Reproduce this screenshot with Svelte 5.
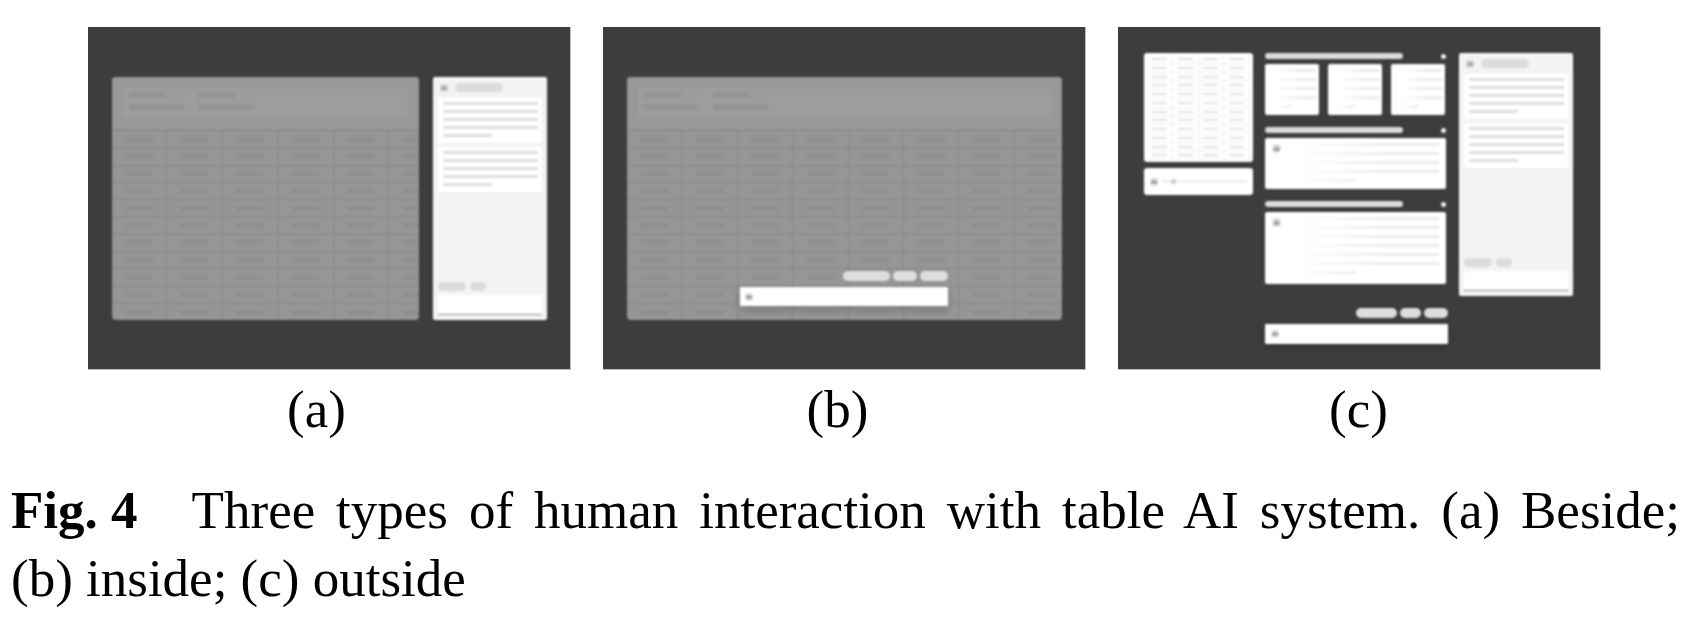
<script lang="ts">
    const rows = Array.from({ length: 11 })
    const miniRows = Array.from({ length: 12 })

    function range(n: number) {
        return Array.from({ length: n })
    }
</script>

{#snippet sheet(cols: number)}
    <div class="sheet-head">
        <div class="head-box">
            <div class="head-col">
                <span class="bar short"></span>
                <span class="bar long"></span>
            </div>
            <div class="head-col">
                <span class="bar short"></span>
                <span class="bar long"></span>
            </div>
        </div>
    </div>
    {#each rows as _}
        <div class="sheet-row">
            {#each range(cols) as _}
                <div class="sheet-cell"><span></span></div>
            {/each}
        </div>
    {/each}
{/snippet}

{#snippet message()}
    <div class="message">
        <span></span><span></span><span></span><span></span><span class="last"></span>
    </div>
{/snippet}

{#snippet assistant()}
    <div class="side-head">
        <span class="ai square">AI</span>
        <span class="side-pill"></span>
    </div>
    {@render message()}
    {@render message()}
    <div class="side-fill"></div>
    <div class="side-chips">
        <span class="chip wide"></span>
        <span class="chip"></span>
    </div>
    <div class="side-input"></div>
{/snippet}

{#snippet fadedLines(count: number)}
    {#each range(count) as _}
        <span class="fade"></span>
    {/each}
    <span class="fade end"></span>
{/snippet}

{#snippet sectionTitle()}
    <div class="section-title">
        <span class="title-bar"></span>
        <span class="title-dot"></span>
    </div>
{/snippet}

<main>
    <div class="figures">
        <figure>
            <div class="panel panel-a">
                <div class="sheet sheet-a">{@render sheet(6)}</div>
                <aside class="assistant">{@render assistant()}</aside>
            </div>
            <figcaption class="label-a">(a)</figcaption>
        </figure>

        <figure>
            <div class="panel panel-b">
                <div class="sheet sheet-b">
                    {@render sheet(8)}
                    <div class="floating">
                        <div class="pills pills-b">
                            <span></span><span></span><span></span>
                        </div>
                        <div class="prompt prompt-b"><span class="ai">AI</span></div>
                    </div>
                </div>
            </div>
            <figcaption class="label-b">(b)</figcaption>
        </figure>

        <figure>
            <div class="panel panel-c">
                <div class="col-left">
                    <div class="mini-sheet">
                        {#each miniRows as _}
                            <div class="mini-row">
                                <span></span><span></span><span></span><span></span>
                            </div>
                        {/each}
                    </div>
                    <div class="slider-card">
                        <span class="ai">AI</span>
                        <div class="slider"><i></i></div>
                    </div>
                </div>

                <div class="col-mid">
                    {@render sectionTitle()}
                    <div class="card-row">
                        <div class="card small">{@render fadedLines(4)}</div>
                        <div class="card small">{@render fadedLines(4)}</div>
                        <div class="card small">{@render fadedLines(4)}</div>
                    </div>
                    {@render sectionTitle()}
                    <div class="card text h51">
                        <span class="ai card-ai">AI</span>
                        {@render fadedLines(4)}
                    </div>
                    {@render sectionTitle()}
                    <div class="card text h72">
                        <span class="ai card-ai">AI</span>
                        {@render fadedLines(6)}
                    </div>
                    <div class="pills pills-c">
                        <span></span><span></span><span></span>
                    </div>
                    <div class="prompt prompt-c"><span class="ai">AI</span></div>
                </div>

                <aside class="assistant assistant-c">{@render assistant()}</aside>
            </div>
            <figcaption class="label-c">(c)</figcaption>
        </figure>
    </div>

    <div class="caption">
        <p class="first"><b>Fig. 4</b><span>Three types of human interaction with table AI system. (a) Beside;</span></p>
        <p>(b) inside; (c) outside</p>
    </div>
</main>

<style>
    :global(body) {
        margin: 0;
        background: #fff;
    }

    main {
        width: 1694px;
        height: 621px;
        overflow: hidden;
        padding-top: 27px;
        box-sizing: border-box;
        font-family: "Liberation Serif", "Times New Roman", serif;
        color: #000;
    }

    .figures {
        display: flex;
        gap: 32px;
        padding-left: 88px;
    }

    figure {
        margin: 0;
        width: 483px;
    }

    figcaption {
        font-size: 53px;
        line-height: 60px;
        margin-top: 9px;
        text-align: center;
    }

    .label-a {
        padding-right: 26px;
    }

    .label-b {
        padding-right: 14px;
    }

    .label-c {
        padding-right: 2px;
    }

    .caption {
        margin: 37px 0 0 11px;
        width: 1669px;
        font-size: 53px;
        line-height: 68px;
    }

    .caption p {
        margin: 0;
    }

    .caption .first {
        display: flex;
        gap: 54px;
    }

    .caption .first span {
        flex: 1;
        text-align: justify;
        text-align-last: justify;
    }

    .panel {
        box-sizing: border-box;
        width: 483px;
        height: 343px;
        background: #3d3d3d;
        border-right: 1px solid #bdbdbd;
        border-bottom: 1px solid #bdbdbd;
        display: flex;
    }

    .panel > * {
        filter: blur(0.8px);
    }

    .panel-a,
    .panel-b {
        align-items: flex-start;
        padding: 50px 0 0 24px;
    }

    .panel-a {
        gap: 14px;
    }

    .panel-c {
        padding: 26px 0 0 26px;
    }

    /* big spreadsheet */
    .sheet {
        position: relative;
        height: 243px;
        border-radius: 4px;
        background: #969696;
        overflow: hidden;
    }

    .sheet-a {
        width: 307px;
    }

    .sheet-b {
        width: 435px;
    }

    .sheet-head {
        box-sizing: border-box;
        height: 53px;
        padding: 11px;
        background: #989898;
    }

    .head-box {
        display: flex;
        gap: 14px;
        height: 29px;
        padding: 4px 6px;
        box-sizing: border-box;
        background: #9d9d9d;
    }

    .head-col {
        display: flex;
        flex-direction: column;
        gap: 6px;
        width: 55px;
    }

    .bar {
        display: block;
        height: 6px;
        background: #949494;
    }

    .bar.short {
        width: 37px;
    }

    .bar.long {
        width: 55px;
    }

    .sheet-row {
        display: flex;
        box-sizing: border-box;
        height: 17.3px;
        border-top: 1px solid #868686;
    }

    .sheet-cell {
        flex: 0 0 55.4px;
        box-sizing: border-box;
        display: flex;
        align-items: center;
        justify-content: center;
        border-right: 1px solid #868686;
    }

    .sheet-cell span {
        width: 27px;
        height: 5px;
        background: #8f8f8f;
    }

    .floating {
        position: absolute;
        right: 114px;
        bottom: 14px;
        width: 208px;
        display: flex;
        flex-direction: column;
        gap: 6px;
    }

    /* AI sidebar */
    .assistant {
        box-sizing: border-box;
        width: 114px;
        height: 243px;
        display: flex;
        flex-direction: column;
        padding: 0 5px 5px;
        border-radius: 3px;
        background: #f3f3f3;
        box-shadow: inset 0 0 0 1px #fff;
    }

    .assistant-c {
        margin-left: 13px;
    }

    .side-head {
        display: flex;
        align-items: center;
        gap: 7px;
        height: 21px;
        padding-left: 2px;
        box-sizing: border-box;
    }

    .side-pill {
        width: 48px;
        height: 9px;
        border-radius: 5px;
        background: #dcdcdc;
    }

    .message {
        box-sizing: border-box;
        height: 45px;
        margin-bottom: 4px;
        padding: 4px 4px 0 5px;
        display: flex;
        flex-direction: column;
        gap: 5px;
        background: #fff;
    }

    .message span {
        display: block;
        height: 3px;
        background: #dedede;
    }

    .message .last {
        width: 49px;
    }

    .side-fill {
        flex: 1;
    }

    .side-chips {
        display: flex;
        gap: 4px;
        margin-bottom: 4px;
    }

    .chip {
        width: 16px;
        height: 9px;
        border-radius: 5px;
        background: #dcdcdc;
    }

    .chip.wide {
        width: 28px;
    }

    .side-input {
        height: 20px;
        box-sizing: border-box;
        background: #fff;
        border-bottom: 1px solid #8a8a8a;
    }

    /* little AI badges */
    .ai {
        display: inline-flex;
        align-items: center;
        justify-content: center;
        flex: none;
        width: 8px;
        height: 8px;
        border-radius: 50%;
        background: #dcdcdc;
        color: #444;
        font-family: "Liberation Sans", Arial, sans-serif;
        font-size: 6px;
        line-height: 8px;
    }

    .ai.square {
        border-radius: 1px;
    }

    .pills {
        display: flex;
        justify-content: flex-end;
    }

    .pills span {
        height: 10px;
        border-radius: 5px;
        background: #dedede;
    }

    .pills-b {
        gap: 3px;
    }

    .pills-b span:nth-child(1) {
        width: 47px;
    }

    .pills-b span:nth-child(2) {
        width: 24px;
    }

    .pills-b span:nth-child(3) {
        width: 28px;
    }

    .pills-c {
        gap: 3px;
        margin: 24px -2px 6px 0;
    }

    .pills-c span:nth-child(1) {
        width: 41px;
    }

    .pills-c span:nth-child(2) {
        width: 21px;
    }

    .pills-c span:nth-child(3) {
        width: 24px;
    }

    .prompt {
        box-sizing: border-box;
        display: flex;
        align-items: center;
        height: 19px;
        padding-left: 5px;
        border-radius: 1px;
        background: #fff;
        box-shadow: 0 4px 8px rgba(0, 0, 0, 0.2);
    }

    .prompt-c {
        height: 20px;
        margin-right: -2px;
        padding-left: 6px;
    }

    /* outside layout */
    .col-left {
        width: 109px;
        margin-right: 12px;
        display: flex;
        flex-direction: column;
        gap: 6px;
    }

    .mini-sheet {
        box-sizing: border-box;
        height: 109px;
        padding: 2px 3px;
        border-radius: 3px;
        background: #fff;
    }

    .mini-row {
        box-sizing: border-box;
        height: 8.75px;
        display: grid;
        grid-template-columns: repeat(4, 1fr);
        align-items: center;
        border-bottom: 1px solid #f0f0f0;
    }

    .mini-row span {
        justify-self: stretch;
        height: 8px;
        border-right: 1px solid #f0f0f0;
        background: linear-gradient(#e2e2e2, #e2e2e2) center / 15px 2px no-repeat;
    }

    .slider-card {
        box-sizing: border-box;
        height: 27px;
        display: flex;
        align-items: center;
        gap: 4px;
        padding: 0 6px;
        border-radius: 3px;
        background: #fff;
    }

    .slider {
        position: relative;
        flex: 1;
        height: 1px;
        background: #d8d8d8;
    }

    .slider i {
        position: absolute;
        left: 9px;
        top: -2px;
        width: 5px;
        height: 5px;
        border-radius: 50%;
        background: #c8c8c8;
    }

    .col-mid {
        width: 181px;
        display: flex;
        flex-direction: column;
    }

    .section-title {
        display: flex;
        align-items: center;
        justify-content: space-between;
        height: 6px;
        margin-bottom: 5px;
    }

    .title-bar {
        width: 138px;
        height: 6px;
        border-radius: 3px;
        background: #dcdcdc;
    }

    .title-dot {
        width: 5px;
        height: 5px;
        border-radius: 50%;
        background: #f0f0f0;
    }

    .card-row {
        display: flex;
        gap: 9px;
        margin-bottom: 12px;
    }

    .card {
        position: relative;
        box-sizing: border-box;
        display: flex;
        flex-direction: column;
        align-items: flex-end;
        gap: 6px;
        padding: 5px 7px 0;
        border-radius: 2px;
        background: #fff;
    }

    .card.small {
        width: 54px;
        height: 51px;
        padding: 5px 3px 0;
    }

    .card.text {
        margin-bottom: 12px;
    }

    .card.h51 {
        height: 51px;
    }

    .card.h72 {
        height: 72px;
        margin-bottom: 0;
    }

    .card-ai {
        position: absolute;
        top: 6px;
        left: 7px;
        width: 9px;
        height: 9px;
    }

    .fade {
        display: block;
        width: 100%;
        height: 3px;
        flex: none;
        background: linear-gradient(to right, #fff 15%, #ececec 70%);
    }

    .fade.end {
        align-self: flex-start;
        width: 50%;
        background: linear-gradient(to right, #fff 30%, #eee 100%);
    }
</style>
